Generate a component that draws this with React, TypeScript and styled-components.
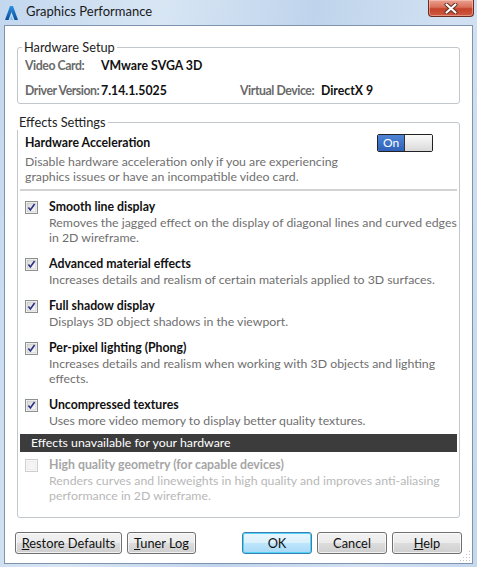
import styled, { createGlobalStyle } from 'styled-components';

const GlobalStyle = createGlobalStyle`
  html, body {
    margin: 0;
    padding: 0;
  }
  body {
    font-family: Lato, "Open Sans", sans-serif;
    font-size: 12.3px;
    color: #1e1e1e;
  }
`;

const Window = styled.div`
  width: 477px;
  height: 567px;
  box-sizing: border-box;
  padding: 0 4px 3px 4px;
  display: flex;
  flex-direction: column;
  background: linear-gradient(100deg, #c3d7ee 0%, #d8e6f4 28%, #bfd4ec 55%, #d2e1f2 80%, #c4d8ee 100%);
`;

const TitleBar = styled.div`
  height: 25px;
  display: flex;
  align-items: flex-start;
`;

const AppIcon = styled.svg`
  width: 13px;
  height: 14px;
  margin: 6px 0 0 1px;
`;

const Caption = styled.div`
  margin: 3px 0 0 8px;
  font-size: 13px;
  line-height: 16px;
  color: #1a1a1a;
  flex: 1;
`;

const CloseButton = styled.div`
  width: 46px;
  height: 17px;
  margin-right: -1px;
  box-sizing: border-box;
  border: 1px solid #6b2d22;
  border-top: none;
  border-radius: 0 0 4px 4px;
  background: linear-gradient(#e9a08f 0%, #d9705a 45%, #c4432b 55%, #cf5a3f 100%);
  box-shadow: inset 0 0 0 1px rgba(255, 220, 210, 0.45);
  display: flex;
  align-items: center;
  justify-content: center;
`;

const Client = styled.div`
  flex: 1;
  background: #fff;
  border: 1px solid #7e93ad;
  padding: 14px 10px 0 10px;
  display: flex;
  flex-direction: column;
  position: relative;
`;

const Group = styled.fieldset<{ $pad: string; $top?: number }>`
  margin: ${(p) => p.$top ?? 0}px 2px 0 2px;
  padding: ${(p) => p.$pad};
  border: 1px solid #c2c7cc;
  border-radius: 3px;
  min-width: 0;
`;

const Legend = styled.legend`
  padding: 0 2px;
  margin-left: -3px;
  font-size: 12.8px;
  line-height: 15px;
  color: #222;
`;

const InfoGrid = styled.div`
  display: grid;
  grid-template-columns: 76px 139px 81px auto;
  row-gap: 10px;
  line-height: 15px;
  font-weight: bold;
  white-space: nowrap;
`;

const InfoLabel = styled.span`
  color: #6a6a6a;
  letter-spacing: -0.45px;
`;

const InfoValue = styled.span`
  color: #111;
`;

const AccelRow = styled.div`
  display: flex;
  justify-content: space-between;
  padding: 5px 24px 0 5px;
`;

const Heading = styled.div<{ $disabled?: boolean }>`
  font-weight: bold;
  line-height: 16px;
  color: ${(p) => (p.$disabled ? '#a6a6a6' : '#111')};
  white-space: nowrap;
`;

const Desc = styled.div<{ $disabled?: boolean; $gap?: number }>`
  line-height: 15px;
  margin-top: ${(p) => p.$gap ?? 0}px;
  color: ${(p) => (p.$disabled ? '#b8b8b8' : '#6f6f6f')};
  white-space: nowrap;
`;

const Line = styled.span`
  display: block;
`;

const Toggle = styled.div`
  width: 56px;
  height: 18px;
  margin-top: -1px;
  box-sizing: border-box;
  border: 1px solid #222;
  border-radius: 2px;
  display: flex;
  overflow: hidden;
`;

const ToggleOn = styled.div`
  width: 26px;
  background: linear-gradient(#4f84d6, #2f62b8);
  color: #fff;
  font-size: 12px;
  line-height: 16px;
  text-align: center;
  border-right: 1px solid #333;
`;

const ToggleOff = styled.div`
  flex: 1;
  background: linear-gradient(#fafafa, #d9d9d9);
`;

const Separator = styled.div`
  height: 2px;
  background: #d3d3d3;
  margin-top: 5px;
`;

const OptionList = styled.div`
  display: flex;
  flex-direction: column;
  gap: 11px;
  padding: 8px 0 0 5px;
`;

const OptionRow = styled.div`
  display: flex;
  gap: 11px;
`;

const Box = styled.svg`
  width: 13px;
  height: 13px;
  flex: none;
  margin-top: 2px;
`;

const UnavailableBar = styled.div`
  margin-top: 6px;
  height: 18px;
  line-height: 18px;
  background: #3c3c3c;
  color: #fff;
  padding-left: 11px;
`;

const DisabledList = styled.div`
  padding: 5px 0 14px 5px;
`;

const Footer = styled.div`
  display: flex;
  gap: 5px;
  margin-top: 14px;
`;

const Button = styled.div<{ $w: number; $default?: boolean }>`
  width: ${(p) => p.$w}px;
  height: 22px;
  box-sizing: border-box;
  border: 1px solid ${(p) => (p.$default ? '#3c7fb1' : '#707070')};
  border-radius: 3px;
  background: ${(p) =>
    p.$default
      ? 'linear-gradient(#eaf6fd 0%, #d9f0fc 50%, #bee6fd 50%, #a7d9f5 100%)'
      : 'linear-gradient(#f2f2f2 0%, #ebebeb 50%, #dddddd 50%, #cfcfcf 100%)'};
  box-shadow: inset 0 0 0 1px ${(p) => (p.$default ? '#4fd3f7' : 'rgba(255,255,255,0.7)')};
  font-size: 12.8px;
  line-height: 20px;
  text-align: center;
  color: #111;
`;

const Spacer = styled.div`
  flex: 1;
`;

const Key = styled.span`
  text-decoration: underline;
`;

const Grip = styled.svg`
  position: absolute;
  right: 1px;
  bottom: 1px;
  width: 11px;
  height: 11px;
`;

const effects = [
  {
    title: 'Smooth line display',
    lines: ['Removes the jagged effect on the display of diagonal lines and curved edges', 'in 2D wireframe.'],
  },
  {
    title: 'Advanced material effects',
    lines: ['Increases details and realism of certain materials applied to 3D surfaces.'],
  },
  { title: 'Full shadow display', lines: ['Displays 3D object shadows in the viewport.'] },
  {
    title: 'Per-pixel lighting (Phong)',
    lines: ['Increases details and realism when working with 3D objects and lighting', 'effects.'],
  },
  { title: 'Uncompressed textures', lines: ['Uses more video memory to display better quality textures.'] },
];

const CheckBox = ({ checked, disabled }: { checked?: boolean; disabled?: boolean }) => (
  <Box viewBox="0 0 13 13">
    <defs>
      <linearGradient id={disabled ? 'cbd' : 'cbg'} x1="0" y1="0" x2="1" y2="1">
        <stop offset="0" stopColor={disabled ? '#f4f4f4' : '#d6d6d6'} />
        <stop offset="1" stopColor={disabled ? '#f4f4f4' : '#fbfbfb'} />
      </linearGradient>
    </defs>
    <rect x="0.5" y="0.5" width="12" height="12" fill="#fff" stroke={disabled ? '#cfcfcf' : '#8e8f8f'} />
    <rect x="2" y="2" width="9" height="9" fill={`url(#${disabled ? 'cbd' : 'cbg'})`} stroke={disabled ? '#e2e2e2' : '#b9b9b9'} strokeWidth="0.6" />
    {checked && <path d="M3.4 6.5 L5.4 9 L9.6 3" fill="none" stroke="#2d2f86" strokeWidth="1.6" />}
  </Box>
);

const ResizeGrip = () => {
  const dots = [
    [9, 1],
    [9, 4], [6, 4],
    [9, 7], [6, 7], [3, 7],
    [9, 10], [6, 10], [3, 10], [0, 10],
  ];
  return (
    <Grip viewBox="0 0 11 11">
      {dots.map(([x, y], i) => (
        <g key={i}>
          <rect x={x + 1} y={y} width="1" height="1" fill="#fff" />
          <rect x={x} y={y - 1 < 0 ? 0 : y - 1} width="1" height="1" fill="#b9c3cd" />
        </g>
      ))}
    </Grip>
  );
};

const App = () => {
  return (
    <Window>
      <GlobalStyle />
      <TitleBar>
        <AppIcon viewBox="0 0 13 14">
          <defs>
            <linearGradient id="ai" x1="0" y1="0" x2="0" y2="1">
              <stop offset="0" stopColor="#2b8fe0" />
              <stop offset="1" stopColor="#0c4f9c" />
            </linearGradient>
          </defs>
          <path d="M0 14 L5 0 L8 0 L13 14 L9.5 14 L6.5 6 L3.6 14 Z" fill="url(#ai)" />
          <path d="M5.2 14 L6.5 9.5 L7.8 14 Z" fill="#6fbdf1" />
        </AppIcon>
        <Caption>Graphics Performance</Caption>
        <CloseButton>
          <svg width="14" height="11" viewBox="0 0 14 11">
            <path d="M2.5 1.5 L11.5 9.5 M11.5 1.5 L2.5 9.5" stroke="#5b2a22" strokeWidth="4" strokeLinecap="round" />
            <path d="M2.5 1.5 L11.5 9.5 M11.5 1.5 L2.5 9.5" stroke="#fff" strokeWidth="2.2" strokeLinecap="round" />
          </svg>
        </CloseButton>
      </TitleBar>

      <Client>
        <Group $pad="3px 7px 5px 7px">
          <Legend>Hardware Setup</Legend>
          <InfoGrid>
            <InfoLabel>Video Card:</InfoLabel>
            <InfoValue>VMware SVGA 3D</InfoValue>
            <span />
            <span />
            <InfoLabel>Driver Version:</InfoLabel>
            <InfoValue>7.14.1.5025</InfoValue>
            <InfoLabel>Virtual Device:</InfoLabel>
            <InfoValue>DirectX 9</InfoValue>
          </InfoGrid>
        </Group>

        <Group $pad="0 2px" $top={11}>
          <Legend>Effects Settings</Legend>
          <AccelRow>
            <div>
              <Heading>Hardware Acceleration</Heading>
              <Desc $gap={3}>
                <Line>Disable hardware acceleration only if you are experiencing</Line>
                <Line>graphics issues or have an incompatible video card.</Line>
              </Desc>
            </div>
            <Toggle>
              <ToggleOn>On</ToggleOn>
              <ToggleOff />
            </Toggle>
          </AccelRow>
          <Separator />

          <OptionList>
            {effects.map((e) => (
              <OptionRow key={e.title}>
                <CheckBox checked />
                <div>
                  <Heading>{e.title}</Heading>
                  <Desc>
                    {e.lines.map((l) => (
                      <Line key={l}>{l}</Line>
                    ))}
                  </Desc>
                </div>
              </OptionRow>
            ))}
          </OptionList>

          <UnavailableBar>Effects unavailable for your hardware</UnavailableBar>

          <DisabledList>
            <OptionRow>
              <CheckBox disabled />
              <div>
                <Heading $disabled>High quality geometry (for capable devices)</Heading>
                <Desc $disabled>
                  <Line>Renders curves and lineweights in high quality and improves anti-aliasing</Line>
                  <Line>performance in 2D wireframe.</Line>
                </Desc>
              </div>
            </OptionRow>
          </DisabledList>
        </Group>

        <Footer>
          <Button $w={107}>
            <Key>R</Key>estore Defaults
          </Button>
          <Button $w={69}>
            <Key>T</Key>uner Log
          </Button>
          <Spacer />
          <Button $w={70} $default>
            OK
          </Button>
          <Button $w={70}>Cancel</Button>
          <Button $w={70}>
            <Key>H</Key>elp
          </Button>
        </Footer>
        <ResizeGrip />
      </Client>
    </Window>
  );
};

export default App;
